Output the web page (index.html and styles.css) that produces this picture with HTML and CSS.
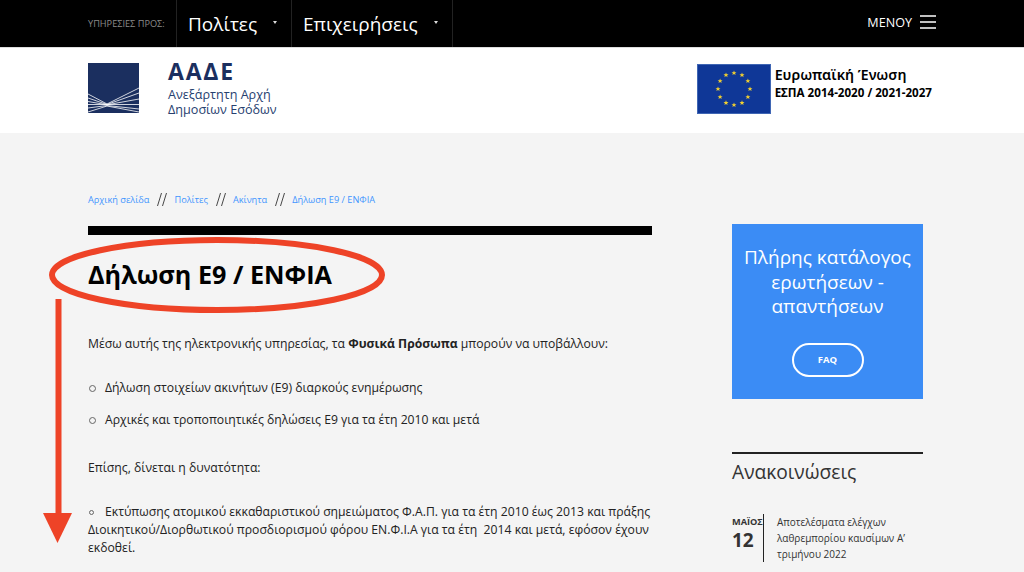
FILE: index.html
```html
<!DOCTYPE html>
<html lang="el">

<head>
    <meta charset="UTF-8">
    <meta name="viewport" content="width=device-width, initial-scale=1.0">
    <title>Δήλωση Ε9 / ΕΝΦΙΑ</title>
    <link rel="stylesheet" href="styles.css">
</head>

<body>
    <div class="topbar">
        <div class="topbar-left">
            <span class="services-label">ΥΠΗΡΕΣΙΕΣ ΠΡΟΣ:</span>
            <div class="top-tab">Πολίτες <span class="caret"></span></div>
            <div class="top-tab tab-wide">Επιχειρήσεις <span class="caret"></span></div>
        </div>
        <div class="menu-toggle">
            <span>ΜΕΝΟΥ</span>
            <svg class="burger" width="16" height="14" viewBox="0 0 16 14">
                <path d="M0 1h16M0 7h16M0 13h16" stroke="#fff" stroke-width="1.5" fill="none" />
            </svg>
        </div>
    </div>

    <header class="brand-row">
        <div class="brand">
            <svg class="brand-mark" width="51" height="50" viewBox="0 0 51 50">
                <rect width="51" height="50" fill="#1b2f5f" />
                <path d="M0 31L19 41M0 35L19 41.500M0 38.500L19 41.800M0 41.500H19M0 45L19 42.500M0 49L19 43M51 25L19 41M51 30L19 41.500M51 36L19 41.800M51 41.500H19M51 46L19 42.500M51 49L19 43" stroke="#fff" stroke-width="0.8" fill="none" />
            </svg>
            <div class="brand-text">
                <div class="brand-name">ΑΑΔΕ</div>
                <div class="brand-sub">Ανεξάρτητη Αρχή<br>Δημοσίων Εσόδων</div>
            </div>
        </div>
        <div class="eu">
            <svg class="eu-flag" width="74" height="50" viewBox="0 0 74 50">
                <defs>
                    <path id="star" d="M0-2.600L.7-.8 2.500-.8 1.100.3 1.600 2.100 0 1 -1.600 2.100 -1.100.3 -2.500-.8 -.7-.8z" fill="#f3d02f" />
                </defs>
                <rect x="0.500" y="0.500" width="73" height="49" fill="#0f3797" stroke="#3f66b4" />
                <use href="#star" x="37" y="9" />
                <use href="#star" x="45" y="11.100" />
                <use href="#star" x="50.900" y="17" />
                <use href="#star" x="53" y="25" />
                <use href="#star" x="50.900" y="33" />
                <use href="#star" x="45" y="38.900" />
                <use href="#star" x="37" y="41" />
                <use href="#star" x="29" y="38.900" />
                <use href="#star" x="23.100" y="33" />
                <use href="#star" x="21" y="25" />
                <use href="#star" x="23.100" y="17" />
                <use href="#star" x="29" y="11.100" />
            </svg>
            <div class="eu-text">
                <div class="eu-title">Ευρωπαϊκή Ένωση</div>
                <div class="eu-sub">ΕΣΠΑ 2014-2020 / 2021-2027</div>
            </div>
        </div>
    </header>

    <div class="page">
        <nav class="breadcrumb">
            <a>Αρχική σελίδα</a>
            <svg class="sep" width="10" height="13" viewBox="0 0 10 13"><path d="M4.500 0L.5 13M9.500 0L5.500 13" stroke="#333" stroke-width="0.9" fill="none" /></svg>
            <a>Πολίτες</a>
            <svg class="sep" width="10" height="13" viewBox="0 0 10 13"><path d="M4.500 0L.5 13M9.500 0L5.500 13" stroke="#333" stroke-width="0.9" fill="none" /></svg>
            <a>Ακίνητα</a>
            <svg class="sep" width="10" height="13" viewBox="0 0 10 13"><path d="M4.500 0L.5 13M9.500 0L5.500 13" stroke="#333" stroke-width="0.9" fill="none" /></svg>
            <a>Δήλωση Ε9 / ΕΝΦΙΑ</a>
        </nav>

        <div class="columns">
            <main class="article">
                <h1>Δήλωση Ε9 / ΕΝΦΙΑ</h1>
                <p class="intro">Μέσω αυτής της ηλεκτρονικής υπηρεσίας, τα <b>Φυσικά Πρόσωπα</b> μπορούν να υποβάλλουν:</p>
                <ul class="items">
                    <li>Δήλωση στοιχείων ακινήτων (Ε9) διαρκούς ενημέρωσης</li>
                    <li>Αρχικές και τροποποιητικές δηλώσεις Ε9 για τα έτη 2010 και μετά</li>
                </ul>
                <p class="also">Επίσης, δίνεται η δυνατότητα:</p>
                <p class="inline-item"><span class="ring"></span>Εκτύπωσης ατομικού εκκαθαριστικού σημειώματος Φ.Α.Π. για τα έτη 2010 έως 2013 και πράξης Διοικητικού/Διορθωτικού προσδιορισμού φόρου ΕΝ.Φ.Ι.Α για τα έτη&nbsp; 2014 και μετά, εφόσον έχουν εκδοθεί.</p>
            </main>

            <aside class="sidebar">
                <div class="faq-card">
                    <div class="faq-title">Πλήρης κατάλογος ερωτήσεων - απαντήσεων</div>
                    <div class="faq-btn">FAQ</div>
                </div>
                <section class="news">
                    <h2>Ανακοινώσεις</h2>
                    <div class="news-item">
                        <div class="news-date">
                            <div class="news-month">ΜΑΪΟΣ</div>
                            <div class="news-day">12</div>
                        </div>
                        <div class="news-text">Αποτελέσματα ελέγχων λαθρεμπορίου καυσίμων Α’ τριμήνου 2022</div>
                    </div>
                </section>
            </aside>
        </div>
    </div>

    <!-- red marks drawn over the screenshot -->
    <svg class="annotations" width="1024" height="572" viewBox="0 0 1024 572">
        <ellipse cx="217" cy="275" rx="165" ry="35" fill="none" stroke="#ee4327" stroke-width="6" />
        <path d="M55.500 299h6v217h-6z" fill="#ee4327" />
        <path d="M43 513h29l-14.500 30z" fill="#ee4327" />
    </svg>
</body>

</html>
```

FILE: styles.css
```css
* {
    margin: 0;
    padding: 0;
    box-sizing: border-box;
}

html,
body {
    height: 572px;
    overflow: hidden;
}

body {
    background-color: #f4f4f4;
    color: #222;
    font-family: "Open Sans", sans-serif;
    position: relative;
}

.topbar {
    height: 47px;
    background-color: #000;
    display: flex;
    justify-content: space-between;
    padding: 0 88px;
    color: #fff;
}

.topbar-left {
    display: flex;
    align-items: center;
}

.services-label {
    font-size: 9.200px;
    color: #8a8a8a;
    width: 88px;
    white-space: nowrap;
}

.top-tab {
    height: 47px;
    width: 115px;
    border-left: 1px solid #222;
    display: flex;
    align-items: center;
    padding-left: 11px;
    font-size: 19px;
    position: relative;
}

.tab-wide {
    width: 162px;
    border-right: 1px solid #222;
}

.caret {
    position: absolute;
    right: 14px;
    top: 21px;
    border-left: 2.500px solid transparent;
    border-right: 2.500px solid transparent;
    border-top: 3px solid #ddd;
}

.menu-toggle {
    display: flex;
    align-items: center;
    gap: 8px;
    font-size: 12.600px;
    padding-bottom: 2px;
}

.burger {
    display: block;
    margin-bottom: 2px;
}

.brand-row {
    height: 86px;
    background-color: #fff;
    border-top: 1px solid #ddd;
    display: flex;
    justify-content: space-between;
    padding: 15px 92px 0 88px;
}

.brand {
    display: flex;
    gap: 29px;
}

.brand-text {
    color: #26406f;
}

.brand-name {
    font-size: 23px;
    font-weight: 700;
    letter-spacing: 1.800px;
    line-height: 20px;
    margin-top: -2px;
    color: #1b2f5f;
}

.brand-sub {
    font-size: 12.600px;
    line-height: 15px;
    margin-top: 6px;
}

.eu {
    display: flex;
    gap: 4px;
    color: #000;
    padding-top: 1px;
}

.eu-text {
    font-family: "Noto Sans", sans-serif;
}

.eu-title {
    font-size: 14.300px;
    font-weight: 600;
    line-height: 19px;
    margin-top: 1px;
}

.eu-sub {
    font-size: 11.600px;
    font-weight: 700;
    line-height: 17px;
}

.page {
    padding: 60px 101px 0 88px;
}

.breadcrumb {
    font-size: 9.200px;
    line-height: 13px;
    color: #3f95ff;
    display: flex;
    align-items: center;
}

.sep {
    margin: 0 7px 0 8px;
}

.columns {
    display: flex;
    gap: 80px;
    margin-top: 18px;
}

.article {
    width: 564px;
    flex-shrink: 0;
    border-top: 9px solid #000;
    margin-top: 2px;
    font-size: 12.200px;
    line-height: 18px;
}

h1 {
    font-size: 25.200px;
    font-weight: 700;
    color: #000;
    line-height: 34px;
    margin-top: 22px;
}

.intro {
    margin-top: 43.500px;
}

.items {
    list-style: none;
    margin-top: 26px;
}

.items li {
    padding-left: 17px;
    position: relative;
    margin-bottom: 14px;
}

.items li::before,
.ring {
    content: "";
    width: 5px;
    height: 5px;
    border: 1px solid #666;
    border-radius: 50%;
}

.items li::before {
    position: absolute;
    left: 1px;
    top: 6px;
}

.also {
    margin-top: 30px;
}

.inline-item {
    margin-top: 26px;
}

.ring {
    display: inline-block;
    margin: 0 11px 1px 1px;
}

.sidebar {
    width: 191px;
    flex-shrink: 0;
}

.faq-card {
    height: 175px;
    background-color: #3b8cf5;
    color: #fff;
    text-align: center;
    padding-top: 21px;
}

.faq-title {
    font-size: 19px;
    line-height: 24.500px;
}

.faq-btn {
    width: 72px;
    height: 34px;
    margin: 24px auto 0;
    border: 2px solid #fff;
    border-radius: 18px;
    font-size: 9.500px;
    font-weight: 700;
    line-height: 30px;
}

.news {
    margin-top: 53px;
    border-top: 2px solid #222;
}

h2 {
    font-size: 19.200px;
    font-weight: 500;
    color: #333;
    line-height: 25px;
    margin-top: 5px;
}

.news-item {
    display: flex;
    margin-top: 30px;
}

.news-date {
    width: 32px;
    height: 48px;
    border-right: 1px solid #222;
    flex-shrink: 0;
    white-space: nowrap;
    color: #333;
}

.news-month {
    font-size: 9.200px;
    font-weight: 700;
    line-height: 14px;
    margin-top: 1px;
}

.news-day {
    font-size: 19px;
    font-weight: 700;
    line-height: 26px;
    margin-top: -2px;
}

.news-text {
    font-size: 10px;
    line-height: 16px;
    padding-left: 13px;
    color: #333;
}

.annotations {
    position: absolute;
    left: 0;
    top: 0;
    pointer-events: none;
}
```
